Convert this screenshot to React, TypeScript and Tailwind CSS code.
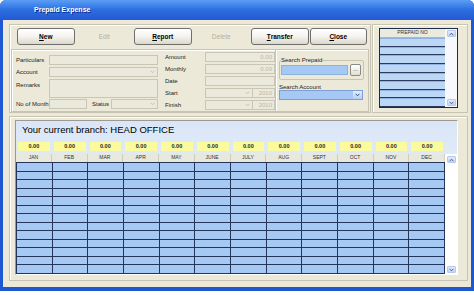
import React from "react";

const months = ["JAN", "FEB", "MAR", "APR", "MAY", "JUNE", "JULY", "AUG", "SEPT", "OCT", "NOV", "DEC"];

function Chevron({ className }: { className: string }) {
  return (
    <svg width="5" height="4" viewBox="0 0 5 4" className={className}>
      <path d="M0.6 0.8 L2.5 2.8 L4.4 0.8" fill="none" stroke="currentColor" strokeWidth="1" />
    </svg>
  );
}

function ScrollArrow({ up }: { up?: boolean }) {
  return (
    <div className="w-[9px] h-[7px] rounded-[1px] border border-[#b9c8ea] bg-gradient-to-b from-[#e3ebfb] to-[#c3d3f3] flex items-center justify-center">
      <Chevron className={"text-[#4d6185] " + (up ? "rotate-180" : "")} />
    </div>
  );
}

function XpButton({ label, disabled }: { label: string; disabled?: boolean }) {
  if (disabled) {
    return (
      <div className="w-[57.5px] h-[17px] flex items-center justify-center text-[6.5px] text-[#b3b0a2]">
        {label}
      </div>
    );
  }
  return (
    <div className="w-[57.5px] h-[17px] rounded-[3px] border border-[#6e6e6e] bg-gradient-to-b from-[#ffffff] via-[#f4f3ee] to-[#dcd8cb] flex items-center justify-center text-[6.5px] font-bold text-black">
      <span className="underline">{label[0]}</span>
      {label.slice(1)}
    </div>
  );
}

const box = "h-[10px] border border-[#c9c6b6] bg-[#ebe9dc]";

export default function App() {
  return (
    <div className="w-[474px] h-[295px] bg-white font-['Liberation_Sans',Arial,sans-serif] text-black overflow-hidden">
      <div className="h-[291px] flex flex-col bg-[#1f56d2] rounded-t-[6px] px-[3px] pb-[4px]">
        {/* title bar */}
        <div className="h-[20px] -mx-[3px] shrink-0 rounded-t-[6px] bg-gradient-to-b from-[#5b9ef5] via-[#2c6de0] to-[#2459d4] flex items-center pl-[34px]">
          <span className="text-[7px] font-bold text-white [text-shadow:1px_1px_0_#0d2c86]">Prepaid Expense</span>
        </div>

        <div className="flex-1 bg-[#ece9d8] flex flex-col pl-[6px] pr-[2px] pt-[4px] gap-[3px]">
          {/* top row */}
          <div className="flex gap-[1px] h-[89px]">
            {/* left frame */}
            <div className="w-[362px] border border-[#c7c4b3] shadow-[inset_1px_1px_0_#ffffff] flex flex-col">
              <div className="flex gap-[1px] pl-[7px] pt-[3px]">
                <XpButton label="New" />
                <XpButton label="Edit" disabled />
                <XpButton label="Report" />
                <XpButton label="Delete" disabled />
                <XpButton label="Transfer" />
                <XpButton label="Close" />
              </div>

              {/* fields frame */}
              <div className="mt-[4px] mx-[1px] h-[63px] border border-[#c7c4b3] shadow-[inset_1px_1px_0_#ffffff] flex text-[6px] leading-[6px] text-[#1c1c1c]">
                {/* left fields */}
                <div className="pl-[4px] pt-[5px] flex flex-col w-[150px]">
                  <div className="flex items-center h-[10px]">
                    <span className="w-[33px]">Particulars</span>
                    <div className={box + " w-[109px]"} />
                  </div>
                  <div className="flex items-center h-[10px] mt-[2px]">
                    <span className="w-[33px]">Account</span>
                    <div className={box + " w-[109px] flex items-center justify-end pr-[2px]"}>
                      <Chevron className="text-[#c2c0b2]" />
                    </div>
                  </div>
                  <div className="flex items-start h-[19px] mt-[2px]">
                    <span className="w-[33px] pt-[3px]">Remarks</span>
                    <div className="h-[19px] w-[109px] border border-[#c9c6b6] bg-[#ebe9dc]" />
                  </div>
                  <div className="flex items-center h-[10px] mt-[1px]">
                    <span className="w-[33px] whitespace-nowrap">No of Month</span>
                    <div className={box + " w-[38px]"} />
                    <span className="w-[24px] pl-[5px]">Status</span>
                    <div className={box + " w-[47px] flex items-center justify-end pr-[2px]"}>
                      <Chevron className="text-[#c2c0b2]" />
                    </div>
                  </div>
                </div>

                {/* middle fields */}
                <div className="pl-[3px] pt-[2px] flex flex-col gap-[2px] w-[113px]">
                  {["Amount", "Monthly", "Date"].map((l, i) => (
                    <div key={l} className="flex items-center h-[10px]">
                      <span className="w-[40px]">{l}</span>
                      <div className={box + " w-[70px] flex items-center justify-end pr-[2px] text-[#b9b6a8]"}>
                        {i < 2 ? "0.00" : ""}
                      </div>
                    </div>
                  ))}
                  {["Start", "Finish"].map((l) => (
                    <div key={l} className="flex items-center h-[10px]">
                      <span className="w-[40px]">{l}</span>
                      <div className={box + " w-[48px] flex items-center justify-end pr-[2px]"}>
                        <Chevron className="text-[#c2c0b2]" />
                      </div>
                      <div className={box + " w-[22px] border-l-0 flex items-center justify-end pr-[2px] text-[#b9b6a8]"}>
                        2010
                      </div>
                    </div>
                  ))}
                </div>

                {/* search area */}
                <div className="flex-1 border-l border-[#c7c4b3] shadow-[inset_1px_0_0_#ffffff] pl-[3px] pr-[2px]">
                  <fieldset className="mt-[7px] w-[85px] border border-[#c7c4b3] rounded-[2px] pl-[1px] pb-[3px]">
                    <legend className="text-[6px] leading-[7px] px-0">Search Prepaid</legend>
                    <div className="flex items-center gap-[2px]">
                      <div className="h-[10px] w-[67px] bg-[#a5c8f4] border border-[#8fb0dd]" />
                      <div className="h-[12px] w-[11px] rounded-[2px] border border-[#8a8a8a] bg-gradient-to-b from-white to-[#e2dfd3] flex items-center justify-center text-[6px] leading-[6px] pb-[2px]">
                        ...
                      </div>
                    </div>
                  </fieldset>
                  <div className="mt-[4px] h-[6px]">Search Account</div>
                  <div className="h-[10px] w-[84px] bg-[#a5c8f4] border border-[#7f9fd4] flex items-center justify-end">
                    <div className="h-[8px] w-[9px] rounded-[1px] bg-gradient-to-b from-[#e6eefc] to-[#b9cdf3] flex items-center justify-center">
                      <Chevron className="text-[#2f4b8a]" />
                    </div>
                  </div>
                </div>
              </div>
            </div>

            {/* right frame */}
            <div className="w-[96px] border border-[#c7c4b3] shadow-[inset_1px_1px_0_#ffffff] pl-[6px] pt-[3px]">
              <div className="w-[79px] h-[80px] border border-[#1d2b4b] flex">
                <div className="w-[65px] flex flex-col">
                  <div className="h-[9px] bg-[#ebeadf] border-b border-[#b7b5aa] flex items-center justify-center text-[5px] text-[#333]">
                    PREPAID NO
                  </div>
                  <div className="flex-1 flex flex-col">
                    {Array.from({ length: 8 }).map((_, i) => (
                      <div key={i} className="flex-1 bg-[#bcd6f6] border-b border-[#2a3b5e] shadow-[inset_0_1px_0_#8fb3e0]" />
                    ))}
                  </div>
                </div>
                <div className="flex-1 bg-[#f7f8fb] flex flex-col justify-between items-center py-[1px]">
                  <ScrollArrow up />
                  <ScrollArrow />
                </div>
              </div>
            </div>
          </div>

          {/* bottom frame */}
          <div className="w-[459px] h-[165px] border border-[#c7c4b3] shadow-[inset_1px_1px_0_#ffffff] pl-[5px] pt-[3px]">
            <div className="w-[443px] h-[155px] border border-t-[#9c9a90] border-l-[#9c9a90] border-b-white border-r-white bg-gradient-to-b from-[#dae6f7] via-[#e6eefa] to-[#f3f7fc] flex flex-col">
              <div className="pt-[2px] pl-[6px] h-[16px] text-[9.5px] leading-[14px] text-black">
                Your current branch: HEAD OFFICE
              </div>
              <div className="mt-[5px] flex w-[429px] h-[9px]">
                {months.map((m) => (
                  <div key={m} className="flex-1 px-[2px]">
                    <div className="h-[9px] bg-[#fbfb9e] flex items-center justify-center text-[5.5px] font-bold text-[#222]">
                      0.00
                    </div>
                  </div>
                ))}
              </div>
              <div className="mt-[3px] flex flex-1">
                <div className="w-[429px] flex flex-col">
                  <div className="h-[8px] flex bg-[#e9e8dd]">
                    {months.map((m) => (
                      <div key={m} className="flex-1 border-r border-[#cfcdc0] flex items-center justify-center text-[5px] text-[#333]">
                        {m}
                      </div>
                    ))}
                  </div>
                  <div className="flex-1 flex flex-col border-l border-[#25355a]">
                    {Array.from({ length: 13 }).map((_, r) => (
                      <div key={r} className="flex-1 flex border-t border-[#25355a] last:border-b shadow-[inset_0_1px_0_#86abdc]">
                        {months.map((m) => (
                          <div key={m} className="flex-1 bg-[#a6c9f4] border-r border-[#25355a]" />
                        ))}
                      </div>
                    ))}
                  </div>
                </div>
                <div className="flex-1 bg-white flex flex-col justify-between items-center pt-[2px] pb-[1px]">
                  <ScrollArrow up />
                  <ScrollArrow />
                </div>
              </div>
            </div>
          </div>
        </div>
      </div>
    </div>
  );
}
